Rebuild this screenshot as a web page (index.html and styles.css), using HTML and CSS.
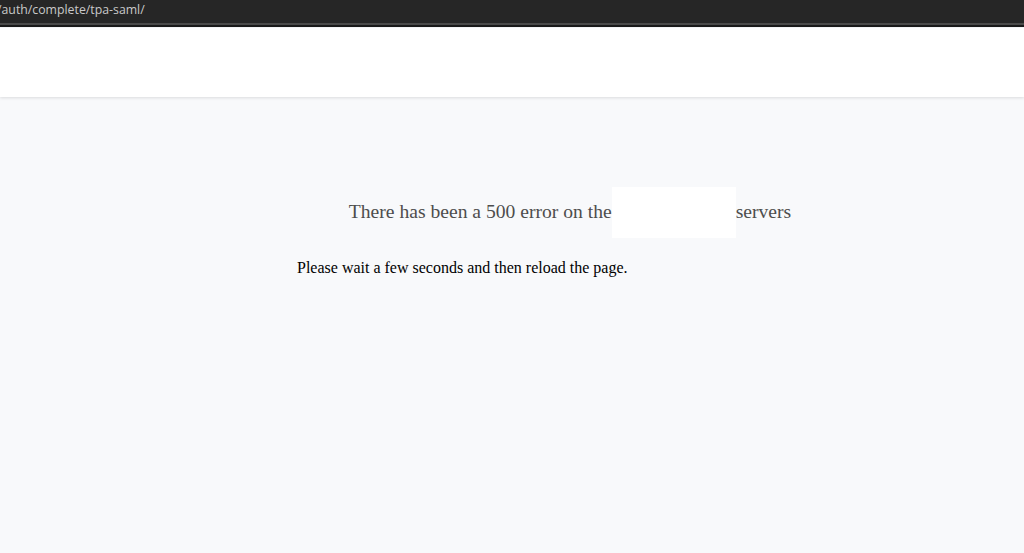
FILE: index.html
```html
<!DOCTYPE html>
<html lang="en">
<head>
    <meta charset="UTF-8">
    <title>Server Error</title>
    <link rel="stylesheet" href="styles.css">
</head>
<body>
    <!-- Adressleiste -->
    <div class="urlbar">
        <span class="url">/auth/complete/tpa-saml/</span>
    </div>

    <!-- Header -->
    <div class="header"></div>

    <!-- Main Content -->
    <div class="main">
        <div class="content">
            <h1>There has been a 500 error on the<span class="redacted"></span>servers</h1>
            <p>Please wait a few seconds and then reload the page.</p>
        </div>
    </div>
</body>
</html>
```

FILE: styles.css
```css
body {
    margin: 0;
    padding: 0;
    background: #f8f9fb;
    font-family: 'Liberation Serif', 'DejaVu Serif', serif;
    height: 553px;
    overflow: hidden;
}

/* Adressleiste */
.urlbar {
    height: 23px;
    background: #262626;
    border-bottom: 2px solid #4a4a4a;
    box-shadow: 0 2px 0 #1a1a1a;
    margin-bottom: 3px;
    overflow: hidden;
}

.url {
    display: block;
    margin-left: -3px;
    font-family: 'Open Sans', sans-serif;
    font-size: 12.3px;
    line-height: 20px;
    color: #c9c9c9;
}

/* Header */
.header {
    height: 69px;
    background: #fff;
    box-shadow: 0 1px 3px rgba(0, 0, 0, 0.12);
}

.main {
    padding-top: 89px;
}

.content {
    margin-left: 297px;
    width: 546px;
}

h1 {
    margin: 0;
    text-align: center;
    font-size: 19.6px;
    font-weight: normal;
    color: #4d4d4d;
    line-height: 51px;
}

.redacted {
    display: inline-block;
    width: 124px;
    height: 51px;
    background: #fff;
    vertical-align: middle;
    margin-top: -2px;
}

p {
    margin: 21px 0 0;
    font-size: 16px;
    color: #000;
}
```
